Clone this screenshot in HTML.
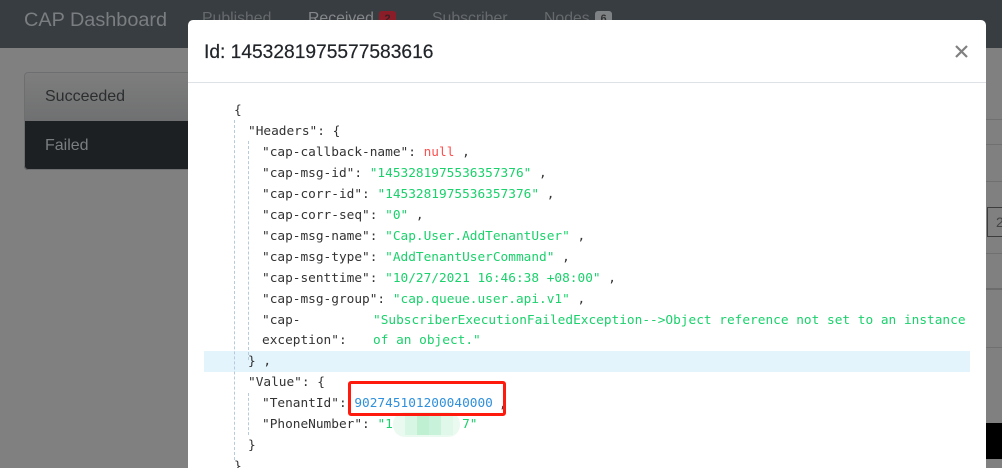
<!DOCTYPE html>
<html><head><meta charset="utf-8">
<style>
html,body{margin:0;padding:0;width:1002px;height:468px;overflow:hidden;background:#808080}
body{position:relative;font-family:"Liberation Sans",sans-serif}
.a{position:absolute}
.nav{left:0;top:0;width:1002px;height:48px;background:#383d41}
.nl{position:absolute;top:9px;font-size:15.8px;line-height:20px;color:#666a6d;white-space:nowrap}
.badge{position:absolute;top:11px;height:17px;width:17px;border-radius:3px;font-size:11px;font-weight:bold;line-height:17px;text-align:center}
.rl{position:absolute;left:986px;width:16px;height:1px;background:#707070}
.modal{left:188px;top:20px;width:798px;height:448px;background:#fff;border-radius:5px 5px 0 0;overflow:hidden}
.l{position:absolute;left:0;height:21px;line-height:21px;font-family:"DejaVu Sans Mono","Liberation Mono",monospace;font-size:12.79px;color:#333;white-space:pre}
.g{color:#1bd16c}.r{color:#ff5050}.b{color:#2f90dc}
.d{position:absolute;width:0;border-left:1px dashed #b5cbdc}
.m{position:absolute;top:392px;height:25px}
</style></head><body>
<div class="a nav"></div>
<div class="a" style="left:24px;top:7px;font-size:19.85px;line-height:26px;color:#7b7e80">CAP Dashboard</div>
<div class="nl" style="left:202px">Published</div>
<div class="nl" style="left:308px;color:#85878a">Received</div>
<div class="badge" style="left:379px;background:#8b1d28;color:#3a2024">2</div>
<div class="nl" style="left:432px">Subscriber</div>
<div class="nl" style="left:544px">Nodes</div>
<div class="badge" style="left:595px;background:#7f8285;color:#333">6</div>

<div class="a" style="left:24px;top:72px;width:170px;height:98px;border-radius:4px;overflow:hidden">
<div class="a" style="left:0;top:0;width:170px;height:49px;background:linear-gradient(#7e7e7e,#6f7071)"></div>
<div class="a" style="left:0;top:49px;width:170px;height:49px;background:#1d2023"></div>
<div class="a" style="left:21px;top:15px;font-size:16px;line-height:20px;color:#2b2d2f">Succeeded</div>
<div class="a" style="left:21px;top:64px;font-size:16px;line-height:20px;color:#7b7e80">Failed</div>
<div class="a" style="left:0;top:0;width:168px;height:96px;border:1px solid #6c6e70;border-radius:4px"></div>
</div>

<div class="rl" style="top:119px"></div>
<div class="rl" style="top:144px"></div>
<div class="rl" style="top:181px"></div>
<div class="a" style="left:987px;top:207px;width:15px;height:30px;box-sizing:border-box;border:1px solid #3d3d3d;border-right:0;font-size:14px;line-height:28px;color:#444;padding-left:8px;overflow:hidden">2</div>
<div class="rl" style="top:253px"></div>
<div class="rl" style="top:288px;height:2px;background:#6c6c6c"></div>
<div class="rl" style="top:347px"></div>
<div class="a" style="left:986px;top:423px;width:16px;height:36px;background:#000"></div>

<div class="a modal">
<div class="a" style="left:16px;top:20px;font-size:19.2px;line-height:26px;color:#212529;-webkit-text-stroke:.2px #212529">Id: 1453281975577583616</div>
<svg class="a" style="left:767px;top:25px" width="13" height="13" viewBox="0 0 13 13"><path d="M1 1L12 12M12 1L1 12" stroke="#808080" stroke-width="2.2" fill="none"/></svg>
<div class="a" style="left:0;top:62px;width:798px;height:1px;background:#dee2e6"></div>
<div class="a" style="left:16px;top:331px;width:766px;height:21px;background:#e3f4fd"></div>

<div class="d" style="left:46px;top:100px;height:340px"></div>
<div class="d" style="left:60px;top:121px;height:219px"></div>
<div class="d" style="left:60px;top:373px;height:42px"></div>

<div class="l" style="left:46px;top:80px">{</div>
<div class="l" style="left:60px;top:101px">"Headers": {</div>
<div class="l" style="left:74px;top:122px">"cap-callback-name": <span class="r">null</span> ,</div>
<div class="l" style="left:74px;top:143px">"cap-msg-id": <span class="g">"1453281975536357376"</span> ,</div>
<div class="l" style="left:74px;top:164px">"cap-corr-id": <span class="g">"1453281975536357376"</span> ,</div>
<div class="l" style="left:74px;top:185px">"cap-corr-seq": <span class="g">"0"</span> ,</div>
<div class="l" style="left:74px;top:206px">"cap-msg-name": <span class="g">"Cap.User.AddTenantUser"</span> ,</div>
<div class="l" style="left:74px;top:227px">"cap-msg-type": <span class="g">"AddTenantUserCommand"</span> ,</div>
<div class="l" style="left:74px;top:248px">"cap-senttime": <span class="g">"10/27/2021 16:46:38 +08:00"</span> ,</div>
<div class="l" style="left:74px;top:269px">"cap-msg-group": <span class="g">"cap.queue.user.api.v1"</span> ,</div>
<div class="l" style="left:74px;top:290px">"cap-</div>
<div class="l g" style="left:185px;top:290px">"SubscriberExecutionFailedException--&gt;Object reference not set to an instance</div>
<div class="l" style="left:74px;top:310px">exception":</div>
<div class="l g" style="left:185px;top:310px">of an object."</div>
<div class="l" style="left:60px;top:331px">} ,</div>
<div class="l" style="left:60px;top:352px">"Value": {</div>
<div class="l" style="left:74px;top:373px">"TenantId": <span class="b">902745101200040000</span></div>
<div class="l" style="left:311px;top:374px">,</div>
<div class="l" style="left:74px;top:394px">"PhoneNumber": <span class="g">"1         7"</span></div>
<div class="m" style="left:205px;width:67px;border-radius:12px;background:#eafaf1"></div>
<div class="m" style="left:217px;width:12px;top:394px;height:21px;background:#d8f6e4"></div>
<div class="m" style="left:229px;width:12px;top:394px;height:21px;background:#bff0d2"></div>
<div class="m" style="left:241px;width:12px;top:394px;height:21px;background:#c9f2da"></div>
<div class="m" style="left:253px;width:12px;top:394px;height:21px;background:#e0f8ea"></div>
<div class="l" style="left:60px;top:415px">}</div>
<div class="l" style="left:46px;top:436px">}</div>
<div class="a" style="left:160px;top:361px;width:158px;height:35px;box-sizing:border-box;border:3px solid #ff1a0e;border-radius:3px"></div>
</div>
</body></html>
